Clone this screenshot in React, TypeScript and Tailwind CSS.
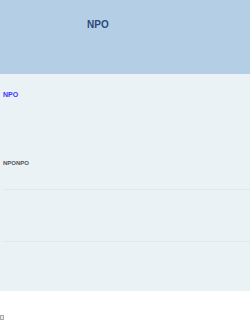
export default function App() {
  return (
    <div className="w-[250px] bg-white font-['Liberation_Sans',Arial,sans-serif]">
      <header className="flex h-[74px] items-start bg-[#b4cee6] pl-[87px] pt-[19px]">
        <h1 className="text-[10px] font-bold leading-[12px] text-[#2d4a7a]">NPO</h1>
      </header>

      <main className="h-[217px] bg-[#ebf2f5] pl-[3px]">
        <p className="pt-[16px] text-[7px] font-bold leading-[9px] text-[#3737ff]">NPO</p>
        <p className="mt-[61px] text-[6px] font-bold leading-[7px] text-[#555]">NPONPO</p>
        <div className="mt-[22px] border-t border-[#e1e8eb]" />
        <div className="mt-[51px] border-t border-[#e1e8eb]" />
      </main>

      <div className="pt-[24px]">
        <span className="block h-[5px] w-[4px] border border-[#aaa] bg-[#eee]" />
      </div>
      <div className="h-[16px]" />
    </div>
  )
}
